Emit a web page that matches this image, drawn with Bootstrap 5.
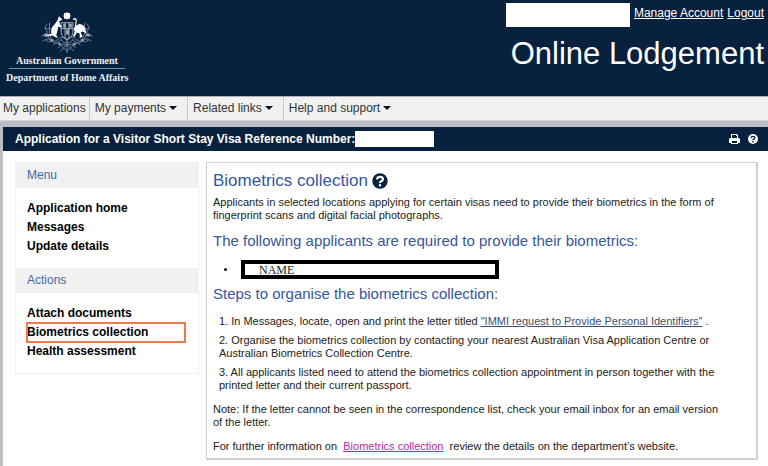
<!DOCTYPE html>
<html lang="en">
<head>
<meta charset="utf-8">
<meta name="viewport" content="width=device-width, initial-scale=1">
<title>Online Lodgement - Biometrics collection</title>
<link href="https://cdn.jsdelivr.net/npm/bootstrap@5.3.0/dist/css/bootstrap.min.css" rel="stylesheet">
<style>
body{font-family:"Liberation Sans",Arial,sans-serif;font-size:12px;line-height:13px;color:#222;background:#fff}
.masthead{background:#08213f;min-height:96px;padding:3px 4px 0 6px}
.masthead a{color:#fff}
.crest{width:122px;padding-top:8px;color:#eef1f5;font:bold 10px/13px "Liberation Serif",serif;white-space:nowrap}
.crest .gov{border-bottom:1px solid #8290a2;padding-bottom:1px;margin:0 3px 2px}
.redact{display:block;background:#fff;width:124px;height:24px}
.redact-sm{width:79px;height:16px}
.site-title{font-size:31px;line-height:36px;margin:9px 0 0;font-weight:400;color:#fff}
.mainnav{background:#f1f1f1;border-top:1px solid #a9b2be;border-bottom:1px solid #d5d5d9}
.mainnav a{color:#333;line-height:23px;padding:0 5px;border-right:1px solid #c9c9cd;text-decoration:none;display:block}
.mainnav li:first-child a{padding:0 3px}
.mainnav li:last-child a{border:0}
.mainnav .dropdown-toggle::after{margin-left:3px;vertical-align:2px;color:#111;border-width:4px 4px 0}
.mainnav .wide{padding-right:10px}
.shell{border-left:3px solid #bdbdc5;border-top:6px solid #bdbdc5}
.casebar{background:#08213f;color:#fff;height:24px;padding:0 10px 0 12px}
.casebar h1{font-size:12px;line-height:16px;margin:0;font-weight:700}
.iconbtn{background:none;border:0;padding:0;display:flex;color:#fff}
.content{padding:11px 10px 7px 12px;gap:7px}
.side{flex:0 0 184px;border:1px solid #f1f1f1}
.side h2{background:#f1f1f1;color:#4668a8;font-size:12px;line-height:25px;margin:0;padding:0 11px}
.side ul{padding:11px 11px 12px;margin:0}
.side a{display:block;color:#000;font-weight:700;text-decoration:none;line-height:19px;width:158px}
.side .current{outline:2px solid #f0784a;outline-offset:-1px}
.panel{border:1px solid #cfcfd6;border-right-width:2px;border-bottom-width:2px;padding:7px 28px 5px 6px;font-size:11px}
.panel h2,.panel h3{color:#3556a0;margin:0;font-weight:400}
.panel h2{font-size:17px;line-height:21px;margin-bottom:5px}
.panel h3{font-size:15px;line-height:20px}
.panel p{margin:0 0 11px}
.panel .intro{margin-bottom:9px}
.panel .steps-title{margin-bottom:11px}
.panel ol{list-style:none;padding:0 0 5px 6px;margin:0}
.panel ol li{margin-bottom:6px}
.names{padding:9px 0 5px 28px;margin:0;list-style:none}
.names li{position:relative}
.names li::before{content:"";width:3px;height:3px;border-radius:50%;background:#111;position:absolute;left:-17px;top:8px}
.namebox{border:4px solid #000;width:258px;height:19px;padding-left:14px;font:12px/12px "Liberation Serif",serif}
.letter{color:#395270}
.visited{color:#c025b0}
</style>
<script src="https://cdn.jsdelivr.net/npm/bootstrap@5.3.0/dist/js/bootstrap.bundle.min.js"></script>
</head>
<body>
<header class="masthead d-flex justify-content-between align-items-start">
  <div class="crest d-flex flex-column text-center">
    <svg class="d-block mx-auto" width="58" height="43" viewBox="0 0 58 44" aria-hidden="true">
      <g fill="none" stroke="#6f7f94" stroke-width="1">
        <path d="M9 13q-4 3-1 7t-4 5q8-3 9 3t-6 2M11 12v13M6 18h9M49 13q4 3 1 7t4 5q-8-3-9 3t6 2M47 12v13M43 18h9"/>
        <path d="M3 26q6-4 8 2t9 1q4-5 9 1q5-6 9-1q7 5 9-1t8-2M4 31q6-5 10 0t9-2q3 6 6 2q3 4 6-2q5 7 9 2t10 0M15 35q5-6 8 0t6-3q3 9 6 3t8 0M20 38q5-7 9-2q4-5 9 2M22 41q4-5 7 0q3-5 7 0M29 28v15"/>
        <path d="M23 12h12v10q-1 6-6 7q-5-1-6-7zM23 18h12M27 12v16M31 12v16" stroke="#a5afbc"/>
      </g>
      <path fill="#9da8b6" d="M25 13h3v4h-3zm6 0h3v4h-3zm-3 6h3v5h-3zM6 23h3v3H6zm43 0h3v3h-3zM12 29h3v2h-3zm31 0h3v2h-3zM20 33h3v2h-3zm15 0h3v2h-3z"/>
      <path fill="#fff" d="m29 1 1 1 2 0v2l1 1-1 1v2h-2l-1 1-1-1h-2V6l-1-1 1-1V2h2z"/>
      <path fill="#fff" d="m21 5 1 2 2 1-1 2-2 0 1 4 2 2-1 1-3-1-1 5-1 4 2 2h-2l-4-2-8 1 7-3q-1-6 3-9l3-4zM35 8q3-2 4 1 0 4-1 6 5-4 9 1 1 2 2 7l-4-2-2 1 2 4-3 2 0-5-3-1-2 4h-2l2-5q-2-2 0-5l1-7-3 0z"/>
    </svg>
    <div class="gov">Australian Government</div>
    <div class="dept">Department of Home Affairs</div>
  </div>
  <div class="text-end">
    <div class="d-flex justify-content-end gap-1">
      <span class="redact"></span>
      <a class="pt-1" href="#">Manage Account</a><a class="pt-1" href="#">Logout</a>
    </div>
    <div class="site-title">Online Lodgement</div>
  </div>
</header>
<nav class="mainnav" aria-label="Main">
  <ul class="list-unstyled d-flex m-0">
    <li><a href="#">My applications</a></li>
    <li><a class="dropdown-toggle wide" href="#" data-bs-toggle="dropdown">My payments</a></li>
    <li><a class="dropdown-toggle wide" href="#" data-bs-toggle="dropdown">Related links</a></li>
    <li><a class="dropdown-toggle" href="#" data-bs-toggle="dropdown">Help and support</a></li>
  </ul>
</nav>
<div class="shell">
  <div class="casebar d-flex align-items-center">
    <h1>Application for a Visitor Short Stay Visa Reference Number:</h1>
    <span class="redact redact-sm"></span>
    <div class="ms-auto d-flex gap-2 align-items-center">
      <button class="iconbtn" type="button" aria-label="Print"><svg width="11" height="10" viewBox="0 0 11 10"><path fill="#fff" fill-rule="evenodd" d="M2 0h6l1 1v3h1l1 1v4H9v1H2V9H0V5l1-1h1zm1 1v3h5V2H7V1zM3 7v2h5V7z"/></svg></button>
      <button class="iconbtn" type="button" aria-label="Help"><svg width="10" height="10" viewBox="0 0 16 16"><circle cx="8" cy="8" r="8" fill="#fff"/><path d="M5 6.300q.3-2.500 3-2.500t3 2.300q0 1.400-1.600 2.200T8 10" fill="none" stroke="#08213f" stroke-width="2.200"/><path fill="#08213f" d="M6.900 11.300h2.300v2.200H6.900z"/></svg></button>
    </div>
  </div>
  <div class="content d-flex align-items-start">
    <nav class="side" aria-label="Application">
      <h2 class="fw-normal">Menu</h2>
      <ul class="list-unstyled">
        <li><a href="#">Application home</a></li>
        <li><a href="#">Messages</a></li>
        <li><a href="#">Update details</a></li>
      </ul>
      <h2 class="fw-normal">Actions</h2>
      <ul class="list-unstyled">
        <li><a href="#">Attach documents</a></li>
        <li><a class="current" href="#" aria-current="page">Biometrics collection</a></li>
        <li><a href="#">Health assessment</a></li>
      </ul>
    </nav>
    <main class="panel flex-fill">
      <h2 class="d-flex align-items-center gap-1">Biometrics collection
        <button class="iconbtn" type="button" aria-label="Help"><svg width="16" height="16" viewBox="0 0 16 16"><circle cx="8" cy="8" r="7.700" fill="#08213f"/><path d="M5 6.300q.3-2.500 3-2.500t3 2.300q0 1.400-1.600 2.200T8 10" fill="none" stroke="#fff" stroke-width="2.200"/><path fill="#fff" d="M6.900 11.200h2.300v2.200H6.900z"/></svg></button>
      </h2>
      <p class="intro">Applicants in selected locations applying for certain visas need to provide their biometrics in the form of fingerprint scans and digital facial photographs.</p>
      <h3>The following applicants are required to provide their biometrics:</h3>
      <ul class="names"><li><div class="namebox">NAME</div></li></ul>
      <h3 class="steps-title">Steps to organise the biometrics collection:</h3>
      <ol>
        <li>1. In Messages, locate, open and print the letter titled <a class="letter" href="#">"IMMI request to Provide Personal Identifiers"</a> .</li>
        <li>2. Organise the biometrics collection by contacting your nearest Australian Visa Application Centre or Australian Biometrics Collection Centre.</li>
        <li>3. All applicants listed need to attend the biometrics collection appointment in person together with the printed letter and their current passport.</li>
      </ol>
      <p>Note: If the letter cannot be seen in the correspondence list, check your email inbox for an email version of the letter.</p>
      <p class="mb-0">For further information on&nbsp; <a class="visited" href="#">Biometrics collection</a>&nbsp; review the details on the department’s website.</p>
    </main>
  </div>
</div>
</body>
</html>
